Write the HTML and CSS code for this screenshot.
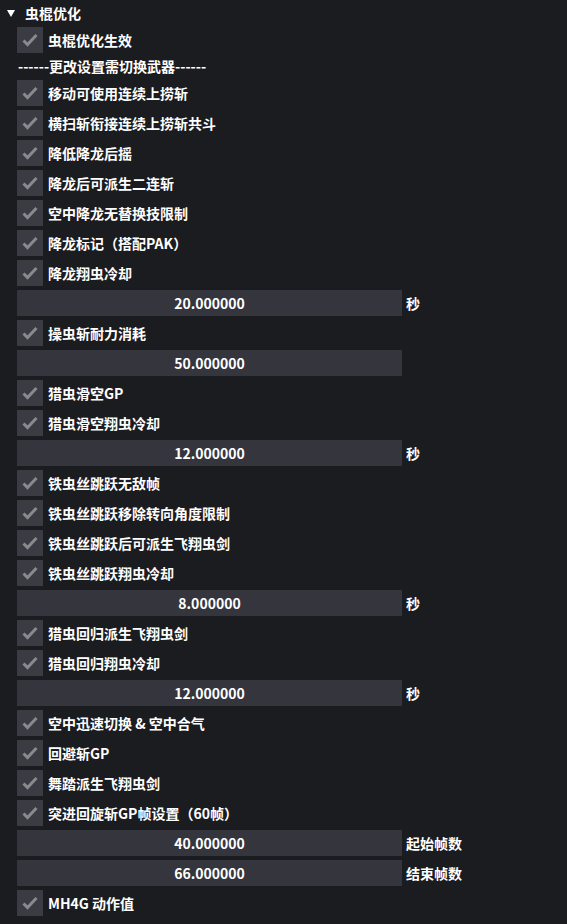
FILE: index.html
```html
<!DOCTYPE html>
<html lang="zh">
<head>
    <meta charset="UTF-8">
    <meta name="viewport" content="width=device-width, initial-scale=1.0">
    <title>虫棍优化</title>
    <link rel="stylesheet" href="styles.css">
</head>
<body>
    <div class="panel">
        <div class="tree-head">
            <span class="arrow"></span>
            <span>虫棍优化</span>
        </div>

        <div class="tree-body">
            <div class="check-row"><span class="box on"></span><span>虫棍优化生效</span></div>
            <div class="note">------更改设置需切换武器------</div>
            <div class="check-row"><span class="box on"></span><span>移动可使用连续上捞斩</span></div>
            <div class="check-row"><span class="box on"></span><span>横扫斩衔接连续上捞斩共斗</span></div>
            <div class="check-row"><span class="box on"></span><span>降低降龙后摇</span></div>
            <div class="check-row"><span class="box on"></span><span>降龙后可派生二连斩</span></div>
            <div class="check-row"><span class="box on"></span><span>空中降龙无替换技限制</span></div>
            <div class="check-row"><span class="box on"></span><span>降龙标记（搭配PAK）</span></div>
            <div class="check-row"><span class="box on"></span><span>降龙翔虫冷却</span></div>
            <div class="slider-row"><div class="slider">20.000000</div><span class="unit">秒</span></div>
            <div class="check-row"><span class="box on"></span><span>操虫斩耐力消耗</span></div>
            <div class="slider-row"><div class="slider">50.000000</div></div>
            <div class="check-row"><span class="box on"></span><span>猎虫滑空GP</span></div>
            <div class="check-row"><span class="box on"></span><span>猎虫滑空翔虫冷却</span></div>
            <div class="slider-row"><div class="slider">12.000000</div><span class="unit">秒</span></div>
            <div class="check-row"><span class="box on"></span><span>铁虫丝跳跃无敌帧</span></div>
            <div class="check-row"><span class="box on"></span><span>铁虫丝跳跃移除转向角度限制</span></div>
            <div class="check-row"><span class="box on"></span><span>铁虫丝跳跃后可派生飞翔虫剑</span></div>
            <div class="check-row"><span class="box on"></span><span>铁虫丝跳跃翔虫冷却</span></div>
            <div class="slider-row"><div class="slider">8.000000</div><span class="unit">秒</span></div>
            <div class="check-row"><span class="box on"></span><span>猎虫回归派生飞翔虫剑</span></div>
            <div class="check-row"><span class="box on"></span><span>猎虫回归翔虫冷却</span></div>
            <div class="slider-row"><div class="slider">12.000000</div><span class="unit">秒</span></div>
            <div class="check-row"><span class="box on"></span><span>空中迅速切换 &amp; 空中合气</span></div>
            <div class="check-row"><span class="box on"></span><span>回避斩GP</span></div>
            <div class="check-row"><span class="box on"></span><span>舞踏派生飞翔虫剑</span></div>
            <div class="check-row"><span class="box on"></span><span>突进回旋斩GP帧设置（60帧）</span></div>
            <div class="slider-row"><div class="slider">40.000000</div><span class="unit">起始帧数</span></div>
            <div class="slider-row"><div class="slider">66.000000</div><span class="unit">结束帧数</span></div>
            <div class="check-row"><span class="box on"></span><span>MH4G 动作值</span></div>
        </div>
    </div>

    <script>
        // draw the check mark into every ticked box
        const tick = '<svg width="26" height="26" viewBox="0 0 26 26">' +
            '<polyline points="6.5,13.5 10.5,17.5 19.5,8" fill="none" stroke="#8a8a8e" stroke-width="3"/></svg>';
        document.querySelectorAll('.box.on').forEach(box => {
            box.innerHTML = tick;
        });
    </script>
</body>
</html>
```

FILE: styles.css
```css
body {
    margin: 0;
    background-color: #1b1c1f;
    color: #ffffff;
    font-family: "Noto Sans CJK SC", "Noto Sans", sans-serif;
    font-size: 14px;
    font-weight: 700;
}
.panel {
    width: 567px;
    height: 924px;
    overflow: hidden;
}
.tree-head {
    height: 26px;
    display: flex;
    align-items: center;
    padding-left: 7px;
}
.arrow {
    width: 0;
    height: 0;
    border-left: 4.5px solid transparent;
    border-right: 4.5px solid transparent;
    border-top: 7px solid #ffffff;
    margin-right: 10px;
}
.tree-body {
    display: flex;
    flex-direction: column;
    gap: 4px;
    margin-top: 1px;
    padding-left: 17px;
}
.check-row {
    height: 26px;
    display: flex;
    align-items: center;
    gap: 5px;
}
.box {
    width: 26px;
    height: 26px;
    background-color: #3b3b43;
    flex-shrink: 0;
}
.box svg {
    display: block;
}
.note {
    height: 19px;
    line-height: 19px;
    padding-left: 1px;
}
.slider-row {
    height: 26px;
    display: flex;
    align-items: center;
}
.slider {
    width: 385px;
    height: 26px;
    line-height: 26px;
    background-color: #35353e;
    text-align: center;
}
.unit {
    margin-left: 4px;
}
```
